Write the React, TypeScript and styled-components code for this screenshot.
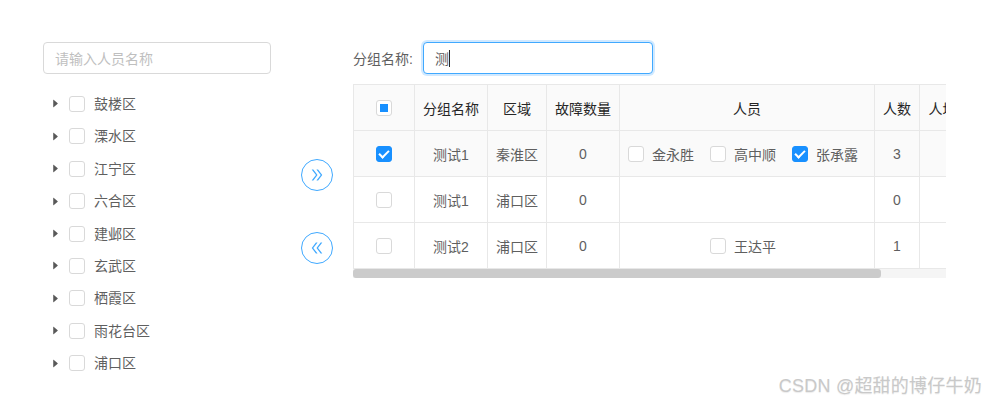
import React from "react";
import styled, { createGlobalStyle } from "styled-components";
import { AiFillCaretRight, AiOutlineDoubleLeft, AiOutlineDoubleRight } from "react-icons/ai";

const GlobalStyle = createGlobalStyle`
  html, body {
    margin: 0;
    padding: 0;
    background: #fff;
  }
  body {
    font-family: "Liberation Sans", "Noto Sans CJK SC", sans-serif;
    font-size: 14px;
    color: #5f5f5f;
  }
`;

const Page = styled.div`
  position: relative;
  width: 986px;
  height: 404px;
  box-sizing: border-box;
  padding: 42px 0 0 43px;
  display: flex;
  overflow: hidden;
`;

const LeftPanel = styled.div`
  width: 228px;
  flex: none;
`;

const SearchInput = styled.input`
  display: block;
  width: 100%;
  height: 32px;
  box-sizing: border-box;
  padding: 1px 11px 0;
  border: 1px solid #d9d9d9;
  border-radius: 4px;
  outline: none;
  font: inherit;
  color: #5f5f5f;

  &::placeholder {
    color: #bfbfbf;
    opacity: 1;
  }
`;

const Tree = styled.ul`
  list-style: none;
  margin: 13.8px 0 0;
  padding: 0;
`;

const TreeRow = styled.li`
  display: flex;
  align-items: center;
  height: 32.4px;
`;

const Switcher = styled.span`
  width: 24px;
  margin-right: 2px;
  flex: none;
  display: flex;
  justify-content: center;
  color: #595959;
  font-size: 11px;
`;

const Box = styled.span<{ $checked?: boolean; $partial?: boolean }>`
  position: relative;
  display: inline-block;
  flex: none;
  width: 16px;
  height: 16px;
  box-sizing: border-box;
  border-radius: 3px;
  border: 1px solid ${(p) => (p.$checked ? "#1890ff" : "#d9d9d9")};
  background: ${(p) => (p.$checked ? "#1890ff" : "#fff")};

  ${(p) =>
    p.$checked &&
    `&::after {
      content: "";
      position: absolute;
      left: 4px;
      top: 1.5px;
      width: 4px;
      height: 8px;
      border: 2px solid #fff;
      border-top: 0;
      border-left: 0;
      transform: rotate(45deg);
    }`}

  ${(p) =>
    p.$partial &&
    `&::after {
      content: "";
      position: absolute;
      left: 3px;
      top: 3px;
      width: 8px;
      height: 8px;
      background: #1890ff;
    }`}
`;

const TreeLabel = styled.span`
  margin-left: 9px;
  line-height: 20px;
`;

const TransferColumn = styled.div`
  width: 82px;
  flex: none;
  display: flex;
  flex-direction: column;
  align-items: center;
  padding-top: 117px;
  padding-left: 10px;
  box-sizing: border-box;
  gap: 41px;
`;

const RoundButton = styled.button`
  width: 32px;
  height: 32px;
  padding: 0;
  border: 1px solid #40a9ff;
  border-radius: 50%;
  background: #fff;
  color: #40a9ff;
  font-size: 16px;
  display: flex;
  align-items: center;
  justify-content: center;
`;

const RightPanel = styled.div`
  width: 593px;
  flex: none;
`;

const GroupRow = styled.div`
  display: flex;
  align-items: center;
  height: 32px;
`;

const GroupLabel = styled.label`
  width: 70px;
  flex: none;
  white-space: nowrap;
`;

const GroupField = styled.div`
  position: relative;
  width: 230px;
`;

const GroupInput = styled.input`
  display: block;
  width: 100%;
  height: 32px;
  box-sizing: border-box;
  padding: 0 11px;
  border: 1px solid #40a9ff;
  border-radius: 4px;
  box-shadow: 0 0 0 2px rgba(24, 144, 255, 0.2);
  outline: none;
  font: inherit;
  color: #5f5f5f;
  caret-color: transparent;
`;

const Caret = styled.span`
  position: absolute;
  left: 26px;
  top: 8px;
  width: 1px;
  height: 17px;
  background: #262626;
`;

const TableWrap = styled.div`
  margin-top: 10px;
  width: 593px;
  overflow: hidden;
`;

const Table = styled.table`
  width: 666px;
  table-layout: fixed;
  border-collapse: separate;
  border-spacing: 0;
  border-top: 1px solid #e8e8e8;
  border-left: 1px solid #e8e8e8;
`;

const HeadCell = styled.th`
  height: 46px;
  padding: 0;
  box-sizing: border-box;
  background: #fafafa;
  border-right: 1px solid #e8e8e8;
  border-bottom: 1px solid #e8e8e8;
  font-weight: 400;
  color: #262626;
  text-align: center;
  white-space: nowrap;
  overflow: hidden;
`;

const Row = styled.tr<{ $highlight?: boolean }>`
  background: ${(p) => (p.$highlight ? "#fafafa" : "#fff")};
`;

const Cell = styled.td`
  height: 46px;
  padding: 0;
  box-sizing: border-box;
  border-right: 1px solid #e8e8e8;
  border-bottom: 1px solid #e8e8e8;
  text-align: center;
  white-space: nowrap;
  overflow: hidden;
`;

const CellBox = styled.div`
  display: flex;
  justify-content: center;
`;

const People = styled.div`
  display: flex;
  justify-content: center;
  gap: 16px;
  padding-right: 8px;
`;

const Person = styled.span`
  display: inline-flex;
  align-items: center;
  gap: 8px;
`;

const ScrollTrack = styled.div`
  height: 9px;
  background: #f5f5f5;
`;

const ScrollThumb = styled.div`
  width: 528px;
  height: 100%;
  background: #cbcbcb;
  border-radius: 3px;
`;

const Watermark = styled.div`
  position: absolute;
  right: 4px;
  bottom: 6px;
  font-size: 18px;
  line-height: 24px;
  letter-spacing: 0.23px;
  color: #c9c9c9;
  text-shadow: 0 1px 1px rgba(0, 0, 0, 0.08);
  white-space: nowrap;
`;

const districts = ["鼓楼区", "溧水区", "江宁区", "六合区", "建邺区", "玄武区", "栖霞区", "雨花台区", "浦口区"];
const columns = [
  { title: "", width: 61 },
  { title: "分组名称", width: 73 },
  { title: "区域", width: 59 },
  { title: "故障数量", width: 73 },
  { title: "人员", width: 255 },
  { title: "人数", width: 45 },
  { title: "人均故障", width: 74 },
  { title: "", width: 26 },
];
const rows = [
  {
    name: "测试1",
    area: "秦淮区",
    faults: 0,
    count: 3,
    checked: true,
    people: [
      { name: "金永胜", checked: false },
      { name: "高中顺", checked: false },
      { name: "张承露", checked: true },
    ],
  },
  { name: "测试1", area: "浦口区", faults: 0, count: 0, checked: false, people: [] },
  {
    name: "测试2",
    area: "浦口区",
    faults: 0,
    count: 1,
    checked: false,
    people: [{ name: "王达平", checked: false }],
  },
];

export default function App() {
  return (
    <Page>
      <GlobalStyle />
      <LeftPanel>
        <SearchInput placeholder="请输入人员名称" />
        <Tree>
          {districts.map((d) => (
            <TreeRow key={d}>
              <Switcher>
                <AiFillCaretRight />
              </Switcher>
              <Box />
              <TreeLabel>{d}</TreeLabel>
            </TreeRow>
          ))}
        </Tree>
      </LeftPanel>
      <TransferColumn>
        <RoundButton>
          <AiOutlineDoubleRight />
        </RoundButton>
        <RoundButton>
          <AiOutlineDoubleLeft />
        </RoundButton>
      </TransferColumn>
      <RightPanel>
        <GroupRow>
          <GroupLabel>分组名称:</GroupLabel>
          <GroupField>
            <GroupInput readOnly value="测" />
            <Caret />
          </GroupField>
        </GroupRow>
        <TableWrap>
          <Table>
            <colgroup>
              {columns.map((c, i) => (
                <col key={i} style={{ width: c.width }} />
              ))}
            </colgroup>
            <thead>
              <tr>
                {columns.map((c, i) => (
                  <HeadCell key={i}>
                    {i === 0 ? (
                      <CellBox>
                        <Box $partial />
                      </CellBox>
                    ) : (
                      c.title
                    )}
                  </HeadCell>
                ))}
              </tr>
            </thead>
            <tbody>
              {rows.map((r, i) => (
                <Row key={i} $highlight={i === 0}>
                  <Cell>
                    <CellBox>
                      <Box $checked={r.checked} />
                    </CellBox>
                  </Cell>
                  <Cell>{r.name}</Cell>
                  <Cell>{r.area}</Cell>
                  <Cell>{r.faults}</Cell>
                  <Cell>
                    <People>
                      {r.people.map((p) => (
                        <Person key={p.name}>
                          <Box $checked={p.checked} />
                          {p.name}
                        </Person>
                      ))}
                    </People>
                  </Cell>
                  <Cell>{r.count}</Cell>
                  <Cell />
                  <Cell />
                </Row>
              ))}
            </tbody>
          </Table>
          <ScrollTrack>
            <ScrollThumb />
          </ScrollTrack>
        </TableWrap>
      </RightPanel>
      <Watermark>CSDN @超甜的博仔牛奶</Watermark>
    </Page>
  );
}
